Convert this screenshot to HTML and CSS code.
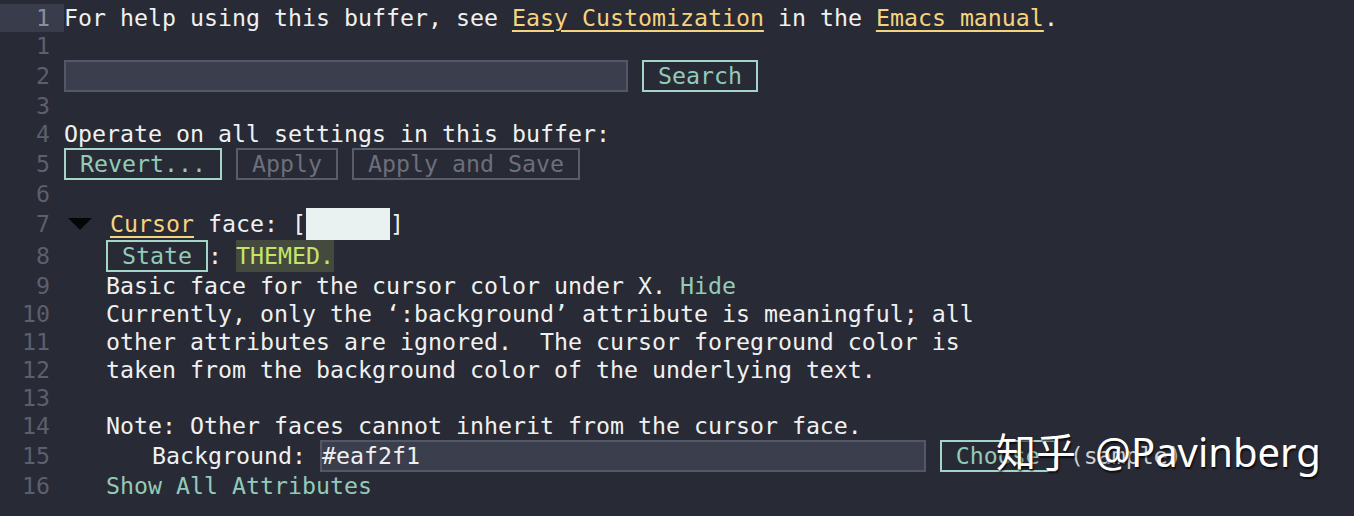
FILE: index.html
```html
<!DOCTYPE html>
<html lang="en">
<head>
<meta charset="utf-8">
<title>Customize Face: Cursor</title>
<link rel="stylesheet" href="styles.css">
</head>
<body>
<div class="buffer">
  <div class="row cur"><span class="ln">1</span><div class="code"><span class="t">For help using this buffer, see </span><span class="t link">Easy Customization</span><span class="t"> in the </span><span class="t link">Emacs manual</span><span class="t">.</span></div></div>
  <div class="row"><span class="ln">1</span><div class="code"></div></div>
  <div class="row tall"><span class="ln">2</span><div class="code"><span class="field search-field"></span><span class="t"> </span><span class="btn">Search</span></div></div>
  <div class="row"><span class="ln">3</span><div class="code"></div></div>
  <div class="row"><span class="ln">4</span><div class="code"><span class="t">Operate on all settings in this buffer:</span></div></div>
  <div class="row tall"><span class="ln">5</span><div class="code"><span class="btn">Revert...</span><span class="t"> </span><span class="btn off">Apply</span><span class="t"> </span><span class="btn off">Apply and Save</span></div></div>
  <div class="row"><span class="ln">6</span><div class="code"></div></div>
  <div class="row tall"><span class="ln">7</span><div class="code"><span class="tri"><svg width="24" height="12" viewBox="0 0 24 12"><polygon points="0,0 24,0 12,12" fill="#050608"/></svg></span><span class="t"> </span><span class="t link">Cursor</span><span class="t"> face: [</span><span class="sample"></span><span class="t">]</span></div></div>
  <div class="row tall"><span class="ln">8</span><div class="code"><span class="t">   </span><span class="btn">State</span><span class="t">: </span><span class="themed">THEMED.</span></div></div>
  <div class="row"><span class="ln">9</span><div class="code"><span class="t">   Basic face for the cursor color under X. </span><span class="t teal">Hide</span></div></div>
  <div class="row"><span class="ln">10</span><div class="code"><span class="t">   Currently, only the ‘:background’ attribute is meaningful; all</span></div></div>
  <div class="row"><span class="ln">11</span><div class="code"><span class="t">   other attributes are ignored.  The cursor foreground color is</span></div></div>
  <div class="row"><span class="ln">12</span><div class="code"><span class="t">   taken from the background color of the underlying text.</span></div></div>
  <div class="row"><span class="ln">13</span><div class="code"></div></div>
  <div class="row"><span class="ln">14</span><div class="code"><span class="t">   Note: Other faces cannot inherit from the cursor face.</span></div></div>
  <div class="row tall"><span class="ln">15</span><div class="code shift"><span class="t">      Background: </span><span class="field bg-field">#eaf2f1</span><span class="t"> </span><span class="btn">Choose</span><span class="t sample-text"> (sample)</span></div></div>
  <div class="row"><span class="ln">16</span><div class="code"><span class="t">   </span><span class="t teal">Show All Attributes</span></div></div>
</div>
<div class="watermark"><span class="wm-cjk">知乎</span><span class="wm-at">@Pavinberg</span></div>
</body>
</html>
```
FILE: styles.css
```css
html, body {
  margin: 0;
  padding: 0;
}
body {
  background: #282a36;
  color: #eef1f1;
  font-family: "DejaVu Sans Mono", "Liberation Mono", monospace;
  font-size: 23.25px;
  width: 1354px;
  height: 516px;
  overflow: hidden;
  position: relative;
}
.buffer {
  padding-top: 4px;
}
.row {
  display: flex;
  height: 28px;
  align-items: center;
}
.row.tall {
  height: 32px;
}
.ln {
  flex: none;
  width: 64px;
  box-sizing: border-box;
  padding-right: 14px;
  text-align: right;
  line-height: 28px;
  color: #5c5f6e;
}
.row.cur .ln {
  background: #393c4a;
  color: #8b8e9c;
}
.code {
  display: flex;
  align-items: center;
  height: 100%;
  white-space: pre;
}
.code.shift {
  padding-left: 4px;
}
.t {
  line-height: 28px;
}
.link {
  color: #f4d47c;
  text-decoration: underline;
  text-decoration-thickness: 2px;
  text-underline-offset: 4px;
}
.teal {
  color: #93cbb9;
}
.btn {
  display: block;
  height: 32px;
  box-sizing: border-box;
  border: 2px solid #a3d6c9;
  padding: 0 1ch;
  line-height: 28px;
  color: #93cbb9;
}
.btn.off {
  border-color: #595c69;
  color: #6c6f7c;
}
.field {
  display: block;
  height: 32px;
  box-sizing: border-box;
  background: #3b3e4d;
  border: 2px solid #535766;
  line-height: 28px;
  color: #eef1f1;
}
.search-field {
  width: calc(40ch + 4px);
}
.bg-field {
  width: calc(43ch + 4px);
}
.tri {
  display: flex;
  align-items: center;
  justify-content: center;
  width: 32px;
  height: 28px;
}
.tri svg {
  display: block;
}
.sample {
  display: block;
  width: 6ch;
  height: 32px;
  background: #eaf2f1;
}
.themed {
  display: block;
  height: 32px;
  line-height: 32px;
  background: #444a3d;
  color: #c5e46c;
}
.sample-text {
  color: #cdd1d4;
}
.watermark {
  position: absolute;
  left: 996px;
  top: 430px;
  font-family: "Noto Sans", "Noto Sans CJK SC", sans-serif;
  font-size: 40px;
  line-height: 40px;
  color: #ffffff;
  white-space: nowrap;
  text-shadow: 1px 2px 2px rgba(0, 0, 0, 0.75);
}
.wm-cjk {
  font-family: "Noto Sans CJK SC", sans-serif;
}
.wm-at {
  margin-left: 19px;
}
```
